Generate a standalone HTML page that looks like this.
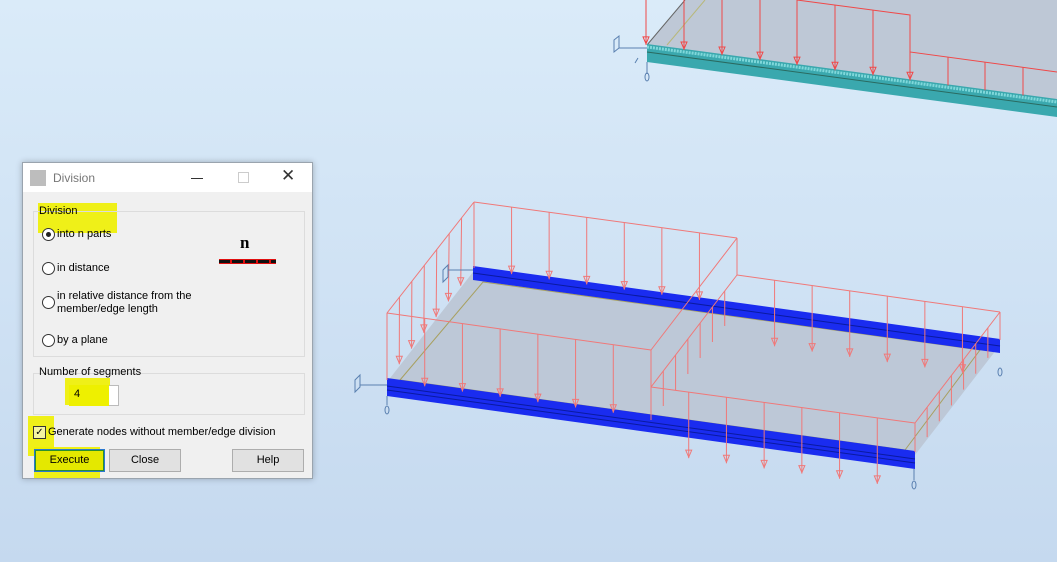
<!DOCTYPE html>
<html><head><meta charset="utf-8"><style>
body{margin:0;width:1057px;height:562px;overflow:hidden;background:linear-gradient(#daebf9,#c5d9ef);font-family:"Liberation Sans",sans-serif;position:relative}
svg{position:absolute;left:0;top:0}
.dlg{position:absolute;left:22px;top:162px;width:289px;height:315px;background:#f0f0f0;border:1px solid #9aa4ae;box-shadow:0 0 6px rgba(0,0,0,.25);font-size:11px;color:#000}
.tb{height:29px;background:#fff;position:relative}
.abs{position:absolute}
.grp{position:absolute;border:1px solid #dcdcdc}
.rad{position:absolute;width:11px;height:11px;border:1px solid #333;border-radius:50%;background:#fff}
.btn{position:absolute;height:21px;background:#e1e1e1;border:1px solid #adadad;text-align:center;line-height:21px;font-size:11px}
.hl{position:absolute;background:#eef000;opacity:.9}
</style></head><body>
<svg width="1057" height="562" id="sv">
<polygon points="685,0 1057,0 1057,100 647,45" fill="#bec8d6"/>
<line x1="647" y1="45" x2="685" y2="0" stroke="#666" stroke-width="1"/>
<line x1="667" y1="45" x2="705" y2="0" stroke="#b8b87a" stroke-width="1"/>
<polygon points="647,44 1057,99 1057,117 647,62" fill="#3aa8ae"/>
<line x1="647" y1="52" x2="1057" y2="107" stroke="#2a6a60" stroke-width="1"/>
<line x1="647" y1="47" x2="1057" y2="102" stroke="#7fd8da" stroke-width="3" stroke-dasharray="2,1"/>
<polyline points="797,0 910,15 910,52 1057,72" fill="none" stroke="#f04848"/>
<g id="trl" stroke="#f04848" fill="none"></g>
<path d="M614,40 l5,-4 v12 l-5,4z M619,48 h28 M638,58 l-3,5 M647,62 v12" stroke="#5a80b0" fill="none"/>
<ellipse cx="647" cy="77" rx="2" ry="4" fill="none" stroke="#5a80b0"/>
<polygon points="387,382 473,272 1000,345 915,455" fill="#bdc8d7"/>
<polygon points="400,380 483,282 980,350 905,450" fill="none" stroke="#a8a060" stroke-width="1"/>
<polygon points="473,266 1000,339 1000,353 473,280" fill="#1a2cf0"/>
<polygon points="387,378 915,451 915,469 387,396" fill="#1a2cf0"/>
<line x1="387" y1="386" x2="915" y2="459" stroke="#0a1aa0" stroke-width="1"/>
<line x1="387" y1="390" x2="915" y2="463" stroke="#0a1aa0" stroke-width="1"/>
<line x1="473" y1="273" x2="1000" y2="346" stroke="#0a1aa0" stroke-width="1"/>
<g id="bl" stroke="#f07878" fill="none" stroke-width="1"></g>
<path d="M355,380 l5,-5 v12 l-5,5z M360,385 h27 M443,270 l5,-5 v12 l-5,5z M448,270 h25" stroke="#5a80b0" fill="none"/>
<line x1="387" y1="396" x2="387" y2="405" stroke="#5a80b0"/>
<ellipse cx="387" cy="410" rx="2" ry="4" fill="none" stroke="#5a80b0"/>
<line x1="914" y1="469" x2="914" y2="480" stroke="#5a80b0"/>
<ellipse cx="914" cy="485" rx="2" ry="4" fill="none" stroke="#5a80b0"/>
<ellipse cx="1000" cy="372" rx="2" ry="4" fill="none" stroke="#5a80b0"/>
</svg>
<script>
var s="http://www.w3.org/2000/svg";
function L(g,x1,y1,x2,y2){var l=document.createElementNS(s,"line");l.setAttribute("x1",x1);l.setAttribute("y1",y1);l.setAttribute("x2",x2);l.setAttribute("y2",y2);g.appendChild(l);}
function A(g,x,y){var p=document.createElementNS(s,"path");p.setAttribute("d","M"+(x-3)+","+(y-8)+" h6 l-3,7z");g.appendChild(p);}
var t=document.getElementById("trl");
[646,684,722,760,797,835,873,910].forEach(function(x,i){var yb=45+(x-647)*0.134;var yt=x<797?0:(x<=910?(x-797)*0.133:0);L(t,x,yt,x,yb);A(t,x,yb);});
[948,985,1023].forEach(function(x){var yb=45+(x-647)*0.134;L(t,x,52+(x-910)*0.136,x,yb);});
var g=document.getElementById("bl");
var P=[[387,313],[474,202],[737,238],[651,350],[387,313]];for(var i=0;i<4;i++)L(g,P[i][0],P[i][1],P[i+1][0],P[i+1][1]);
var Q=[[651,387],[737,275],[1000,312],[915,423],[651,387]];for(i=0;i<4;i++)L(g,Q[i][0],Q[i][1],Q[i+1][0],Q[i+1][1]);
L(g,387,313,387,380);L(g,474,202,474,268);L(g,737,238,737,275);L(g,651,350,651,420);L(g,1000,312,1000,340);L(g,915,423,915,452);
function lerp(a,b,f){return [a[0]+(b[0]-a[0])*f,a[1]+(b[1]-a[1])*f];}
for(i=1;i<7;i++){var a=lerp([474,202],[737,238],i/7);L(g,a[0],a[1],a[0],a[1]+67);A(g,a[0],a[1]+67);
var b=lerp([387,313],[651,350],i/7);L(g,b[0],b[1],b[0],b[1]+68);A(g,b[0],b[1]+68);
var c=lerp([737,275],[1000,312],i/7);L(g,c[0],c[1],c[0],c[1]+66);A(g,c[0],c[1]+66);
var d=lerp([651,387],[915,423],i/7);L(g,d[0],d[1],d[0],d[1]+66);A(g,d[0],d[1]+66);}
for(i=1;i<7;i++){var e=lerp([387,313],[474,202],i/7);var f=lerp([387,380],[473,270],i/7);L(g,e[0],e[1],f[0],f[1]);A(g,f[0],f[1]);
var h=lerp([651,387],[737,275],i/7);L(g,h[0],h[1],h[0],h[1]+35);
var k=lerp([915,423],[1000,312],i/7);L(g,k[0],k[1],k[0],k[1]+30);}
</script>
<div class="dlg">
 <div class="tb">
  <div class="abs" style="left:7px;top:7px;width:16px;height:16px;background:#bdbdbd"></div>
  <div class="abs" style="left:30px;top:8px;font-size:12px;color:#777">Division</div>
  <div class="abs" style="left:168px;top:15px;width:12px;height:1px;background:#333"></div>
  <div class="abs" style="left:215px;top:9px;width:9px;height:9px;border:1px solid #ccc"></div>
  <div class="abs" style="left:258px;top:3px;font-size:17px;color:#333">✕</div>
 </div>
 <div class="hl" style="left:15px;top:40px;width:79px;height:30px"></div>
 <div class="hl" style="left:42px;top:215px;width:45px;height:27px"></div>
 <div class="hl" style="left:5px;top:253px;width:26px;height:40px"></div>
 <div class="hl" style="left:11px;top:284px;width:66px;height:31px"></div>
 <div class="grp" style="left:10px;top:48px;width:270px;height:144px"></div>
 <div class="abs" style="left:16px;top:42px">Division</div>
 <div class="rad" style="left:19px;top:65px"><div class="abs" style="left:3px;top:3px;width:5px;height:5px;border-radius:50%;background:#222"></div></div>
 <div class="abs" style="left:34px;top:65px">into n parts</div>
 <div class="rad" style="left:19px;top:99px"></div><div class="abs" style="left:34px;top:99px">in distance</div>
 <div class="rad" style="left:19px;top:133px"></div><div class="abs" style="left:34px;top:127px;line-height:13px">in relative distance from the<br>member/edge length</div>
 <div class="rad" style="left:19px;top:171px"></div><div class="abs" style="left:34px;top:171px">by a plane</div>
 <div class="abs" style="left:217px;top:70px;font-family:'Liberation Serif',serif;font-weight:bold;font-size:17px">n</div>
 <div class="abs" style="left:196px;top:96px;width:57px;height:3px;background:repeating-linear-gradient(90deg,#111 0 11px,#e01010 11px 13px);border-top:1px solid #e01010;border-bottom:1px solid #e01010"></div>
 <div class="grp" style="left:10px;top:210px;width:270px;height:40px"></div>
 <div class="abs" style="left:16px;top:203px">Number of segments</div>
 <div class="abs" style="left:46px;top:222px;width:48px;height:19px;background:#fff;border:1px solid #bbb"></div>
 <div class="abs" style="left:46px;top:222px;width:40px;height:21px;background:#eef000"></div>
 <div class="abs" style="left:51px;top:225px">4</div>
 <div class="abs" style="left:10px;top:263px;width:11px;height:11px;border:1px solid #333;background:#f4f4a0;font-size:10px;line-height:11px;text-align:center">✓</div>
 <div class="abs" style="left:25px;top:263px">Generate nodes without member/edge division</div>
 <div class="btn" style="left:11px;top:286px;width:69px;border:1px solid #2b78d0;background:#e4e800;box-shadow:inset 0 0 0 1px #2b9030">Execute</div>
 <div class="btn" style="left:86px;top:286px;width:70px">Close</div>
 <div class="btn" style="left:209px;top:286px;width:70px">Help</div>
</div>
</body></html>
